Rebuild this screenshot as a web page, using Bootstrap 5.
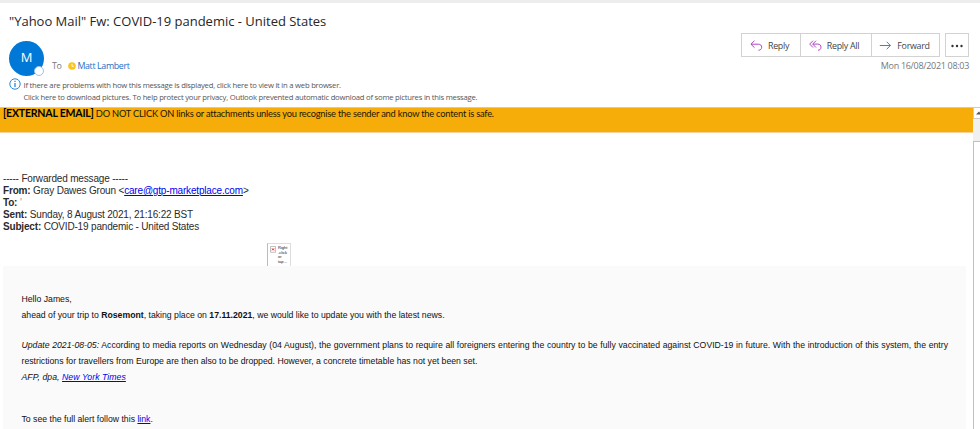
<!DOCTYPE html>
<html lang="en">
<head>
<meta charset="utf-8">
<meta name="viewport" content="width=device-width, initial-scale=1">
<title>COVID-19 pandemic - United States</title>
<link href="https://cdn.jsdelivr.net/npm/bootstrap@5.3.0/dist/css/bootstrap.min.css" rel="stylesheet">
<style>
body{height:429px;font-family:"Open Sans","Noto Sans",sans-serif;color:#262626;background:#fff}
.top-strip{height:3px;background:#ededed}
.mail-head{height:104px;padding-left:9px;padding-right:11px}
.subject{font-size:13px;line-height:20px;margin-top:8px;letter-spacing:-.01px;white-space:nowrap}
.avatar{width:35px;height:35px;margin-top:9.5px;background:#0078d7;color:#fff;font-size:13px}
.presence{right:0;bottom:0;width:10px;height:10px;border:1px solid #9cc3e6;background:#fff}
.to-line{font-size:8.9px;line-height:14px;margin:25px 0 0 8px;color:#777;letter-spacing:-.38px}
.to-line a{color:#1a6fc4;margin-left:1px}
.to-line svg{margin-left:7px}
.info{margin-top:2px;color:#555;font-size:7.7px;line-height:12px;white-space:nowrap;letter-spacing:-.235px}
.info-text{margin:1px 0 0 2.5px}
.actions{margin-top:30px}
.act{height:24px;border:1px solid #d2d2d2;border-radius:0;font-size:8.9px;line-height:1;color:#444;padding:2px 0 0;background:#fff;letter-spacing:-.3px;white-space:nowrap;gap:5px}
.act svg{margin-top:-1px}
.act+.act{margin-left:-1px}
.act+.a4{margin-left:5px}
.a1{width:60px;padding-right:3px}.a2{width:72px;padding-right:4px}.a3{width:69px;padding-right:2px}.a4{width:24px}
.stamp{font-size:9px;line-height:14px;color:#777;margin-top:2px;white-space:nowrap;letter-spacing:-.31px}
.banner{height:26px;background:#f6ad0a;border-top:1px solid #f7c668;border-bottom:1px solid #f9cf9a;padding-left:3px;font-family:Lato,sans-serif;font-size:9.3px;line-height:10px;color:#1b1600;white-space:nowrap;letter-spacing:-.22px}
.banner b{font-size:10.6px;color:#000;letter-spacing:-.24px}
.meta{font-family:"Liberation Sans",Arial,sans-serif;font-size:10px;letter-spacing:-.175px;line-height:11.9px;padding:40px 0 0 3px;color:#2b2b2b;height:110px}
.meta a,.letter a{color:#0000ee}
.missing{width:24px;height:23px;margin-left:267px;border:1px solid #ddd;border-left-color:#bbb;border-bottom:0;font-family:"Liberation Sans",Arial,sans-serif;font-size:4px;line-height:4.5px;padding:2px 0 0 2px;color:#111;gap:2px}
.letter{height:164px;margin:0 7px 0 3px;background:#fafafa;font-family:"Liberation Sans",Arial,sans-serif;font-size:8.7px;line-height:16px;padding:25px 18px 0 18.5px;color:#111;white-space:nowrap}
.update{margin-top:14px;white-space:normal;text-align:justify;text-align-last:justify}
.sources{letter-spacing:.06px}
.full-alert{margin-top:26px}
.scroll-track{width:7px;background:#f0f0f0}
.scroll-up{height:12px;border:1px solid #ccc;border-right:0;background:#fff}
.scroll-thumb{margin-top:22px;border:1px solid #c0c0c0;border-right:0;background:#fff}
</style>
</head>
<body class="overflow-hidden d-flex flex-column">
<div class="top-strip flex-shrink-0"></div>
<header class="mail-head d-flex justify-content-between flex-shrink-0">
  <div>
    <h1 class="subject mb-0 fw-normal">"Yahoo Mail" Fw: COVID-19 pandemic - United States</h1>
    <div class="d-flex">
      <div class="avatar rounded-circle position-relative d-flex align-items-center justify-content-center">M<span class="presence position-absolute rounded-circle"></span></div>
      <div class="to-line d-flex align-items-center"><span>To</span>
        <svg width="8" height="8" viewBox="0 0 8 8"><circle cx="4" cy="4" r="3.8" fill="#fcc419"/><path d="M4 1.8v2.5h1.7" fill="none" stroke="#fff" stroke-width=".9"/></svg>
        <a href="#" class="text-decoration-none">Matt Lambert</a></div>
    </div>
    <div class="info d-flex">
      <svg width="12" height="12" viewBox="0 0 12 12" fill="none" stroke="#2b88d8"><circle cx="6" cy="6" r="5.2"/><path d="M6 5v4M6 2.8v1.3" stroke-width="1.3"/></svg>
      <div class="info-text"><div>If there are problems with how this message is displayed, click here to view it in a web browser.</div><div>Click here to download pictures. To help protect your privacy, Outlook prevented automatic download of some pictures in this message.</div></div>
    </div>
  </div>
  <div class="actions d-flex flex-column align-items-end">
    <div class="d-flex">
      <button class="btn act a1 d-flex align-items-center justify-content-center"><svg width="13" height="11" viewBox="0 0 13 11" fill="none" stroke="#b146c2"><path d="M4.500.7.9 4.200l3.600 3.500M1 4.200h7.300c2.200 0 3.400 1.200 3.400 3s-1.200 3-3.200 3"/></svg><span>Reply</span></button>
      <button class="btn act a2 d-flex align-items-center justify-content-center"><svg width="13" height="11" viewBox="0 0 13 11" fill="none" stroke="#b146c2"><path d="M4 .7.7 4.100 4 7.500M7 .7 3.700 4.100 7 7.500M3.800 4.100h5c2.100 0 3.200 1.300 3.200 3.100s-1.200 3-3 3"/></svg><span>Reply All</span></button>
      <button class="btn act a3 d-flex align-items-center justify-content-center"><svg width="13" height="11" viewBox="0 0 13 11" fill="none" stroke="#2b88d8"><path d="M.8 5.500h10.600M7.700 1.800l3.700 3.700-3.700 3.700"/></svg><span>Forward</span></button>
      <button class="btn act a4 d-flex align-items-center justify-content-center" aria-label="More actions"><svg width="12" height="4" viewBox="0 0 12 4" fill="#333"><circle cx="1.500" cy="2" r="1.200"/><circle cx="6" cy="2" r="1.200"/><circle cx="10.500" cy="2" r="1.200"/></svg></button>
    </div>
    <div class="stamp">Mon 16/08/2021 08:03</div>
  </div>
</header>
<div class="d-flex flex-grow-1">
  <main class="flex-grow-1 overflow-hidden">
    <div class="banner"><b>[EXTERNAL EMAIL]</b> <span>DO NOT CLICK ON links or attachments unless you recognise the sender and know the content is safe.</span></div>
    <div class="meta">
      <div>----- Forwarded message -----</div>
      <div><b>From:</b> Gray Dawes Groun &lt;<a href="#">care@gtp-marketplace.com</a>&gt;</div>
      <div><b>To:</b> <span class="opacity-50">'</span></div>
      <div><b>Sent:</b> Sunday, 8 August 2021, 21:16:22 BST</div>
      <div><b>Subject:</b> COVID-19 pandemic - United States</div>
    </div>
    <div class="missing d-flex"><svg width="6" height="7" viewBox="0 0 6 7"><path d="M.5.5h5v5.800h-5z" fill="#fff" stroke="#999" stroke-width=".6"/><path d="m2 2.400 2 2m0-2-2 2" stroke="#e00" stroke-width=".9"/></svg><span>Right<br>-click<br>or<br>tap...</span></div>
    <div class="letter">
      <div>Hello James,</div>
      <div>ahead of your trip to <b>Rosemont</b>, taking place on <b>17.11.2021</b>, we would like to update you with the latest news.</div>
      <div class="update"><i>Update 2021-08-05:</i> According to media reports on Wednesday (04 August), the government plans to require all foreigners entering the country to be fully vaccinated against COVID-19 in future. With the introduction of this system, the entry</div>
      <div>restrictions for travellers from Europe are then also to be dropped. However, a concrete timetable has not yet been set.</div>
      <div class="sources"><i>AFP, dpa, <a href="#">New York Times</a></i></div>
      <div class="full-alert">To see the full alert follow this <a href="#">link</a>.</div>
    </div>
  </main>
  <aside class="scroll-track d-flex flex-column flex-shrink-0"><div class="scroll-up"><svg class="d-block" width="6" height="10" viewBox="0 0 6 10"><path d="M2 6.500h6L5 3.500z" fill="#555"/></svg></div><div class="scroll-thumb flex-grow-1"></div></aside>
</div>
<script src="https://cdn.jsdelivr.net/npm/bootstrap@5.3.0/dist/js/bootstrap.bundle.min.js"></script>
</body>
</html>
